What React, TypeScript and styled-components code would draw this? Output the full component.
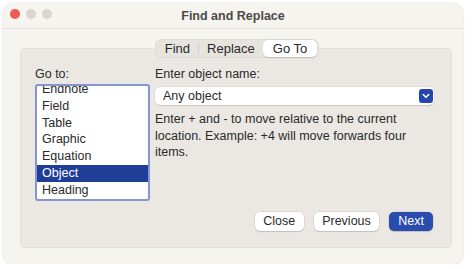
import { FC } from "react"
import styled, { createGlobalStyle } from "styled-components"

const GlobalStyle = createGlobalStyle`
  body {
    margin: 0;
    background: #ffffff;
    font-family: "Liberation Sans", Arial, sans-serif;
  }
`

const items = ["Endnote", "Field", "Table", "Graphic", "Equation", "Object", "Heading"]

const App: FC = () => {
  return (
    <>
      <GlobalStyle />
      <Window>
        <TitleBar>
          <Lights>
            <Light color="#ee5a52" />
            <Light color="#d8d6d2" />
            <Light color="#d8d6d2" />
          </Lights>
          <Title>Find and Replace</Title>
        </TitleBar>
        <Body>
          <Tabs>
            <Tab>Find</Tab>
            <Divider />
            <Tab>Replace</Tab>
            <Tab active>Go To</Tab>
          </Tabs>
          <Panel>
            <Columns>
              <LeftCol>
                <Label>Go to:</Label>
                <ListBox>
                  <ListInner>
                    {items.map((item) => (
                      <Item key={item} selected={item === "Object"}>
                        {item}
                      </Item>
                    ))}
                  </ListInner>
                </ListBox>
              </LeftCol>
              <RightCol>
                <Label>Enter object name:</Label>
                <Select>
                  <span>Any object</span>
                  <Chevron>
                    <svg width="8" height="6" viewBox="0 0 8 6">
                      <path
                        d="M1.2 1.5 L4 4.3 L6.8 1.5"
                        fill="none"
                        stroke="#ffffff"
                        strokeWidth="1.6"
                        strokeLinecap="round"
                        strokeLinejoin="round"
                      />
                    </svg>
                  </Chevron>
                </Select>
                <Help>
                  Enter + and - to move relative to the current location.
                  Example: +4 will move forwards four items.
                </Help>
              </RightCol>
            </Columns>
            <Buttons>
              <Button>Close</Button>
              <Button>Previous</Button>
              <Button primary>Next</Button>
            </Buttons>
          </Panel>
        </Body>
      </Window>
    </>
  )
}

const Window = styled.div`
  margin: 3px 0 0 3px;
  width: 460px;
  height: 261px;
  box-sizing: border-box;
  background: #f6f4ef;
  border-radius: 10px;
  box-shadow: 0 0 0 1px rgba(0, 0, 0, 0.04), 0 1px 3px rgba(0, 0, 0, 0.08);
  display: flex;
  flex-direction: column;
  overflow: hidden;
`

const TitleBar = styled.div`
  position: relative;
  height: 25px;
  border-bottom: 1px solid #e2dfd9;
  display: flex;
  align-items: center;
  justify-content: center;
`

const Lights = styled.div`
  position: absolute;
  left: 7px;
  top: 6px;
  display: flex;
  gap: 6px;
`

const Light = styled.div<{ color: string }>`
  width: 10px;
  height: 10px;
  border-radius: 50%;
  background: ${({ color }) => color};
`

const Title = styled.div`
  font-size: 12.5px;
  font-weight: bold;
  color: #4b4a48;
`

const Body = styled.div`
  flex: 1;
  display: flex;
  flex-direction: column;
  padding: 10px 11px 16px 17px;
`

const Tabs = styled.div`
  align-self: center;
  margin-left: 2px;
  position: relative;
  z-index: 1;
  display: flex;
  align-items: center;
  height: 19px;
  box-sizing: border-box;
  padding: 1px;
  background: #e7e4df;
  border: 1px solid #dedbd5;
  border-radius: 6px;
  margin-bottom: -10px;
`

const Tab = styled.div<{ active?: boolean }>`
  height: 17px;
  line-height: 17px;
  padding: 0 ${({ active }) => (active ? "10px" : "8px")};
  font-size: 13px;
  color: #2a2a2a;
  border-radius: 5px;
  background: ${({ active }) => (active ? "#ffffff" : "transparent")};
  box-shadow: ${({ active }) =>
    active ? "0 0.5px 1px rgba(0,0,0,0.15)" : "none"};
`

const Divider = styled.div`
  width: 1px;
  height: 11px;
  background: #d2cfc9;
`

const Panel = styled.div`
  flex: 1;
  background: #ebe8e3;
  border: 1px solid #e3e0da;
  border-radius: 5px;
  padding: 17px 17px 15px 14px;
  display: flex;
  flex-direction: column;
  justify-content: space-between;
`

const Columns = styled.div`
  display: grid;
  grid-template-columns: 115px 1fr;
  column-gap: 5px;
`

const LeftCol = styled.div`
  display: flex;
  flex-direction: column;
  gap: 2px;
`

const RightCol = styled.div`
  display: flex;
  flex-direction: column;
`

const Label = styled.div`
  font-size: 12.5px;
  color: #2a2a2a;
  line-height: 15px;
  margin-top: 1px;
`

const ListBox = styled.div`
  height: 117px;
  box-sizing: border-box;
  border: 2px solid #8596cf;
  border-radius: 3px;
  background: #ffffff;
  overflow: hidden;
`

const ListInner = styled.div`
  margin-top: -5px;
`

const Item = styled.div<{ selected?: boolean }>`
  height: 16.8px;
  line-height: 16.8px;
  padding-left: 5px;
  font-size: 12.5px;
  color: ${({ selected }) => (selected ? "#ffffff" : "#2a2a2a")};
  background: ${({ selected }) => (selected ? "#1f3e98" : "transparent")};
`

const Select = styled.div`
  margin-top: 5px;
  height: 18px;
  box-sizing: border-box;
  background: #ffffff;
  border-radius: 5px;
  box-shadow: 0 0 0 0.5px rgba(0, 0, 0, 0.08), 0 1px 1px rgba(0, 0, 0, 0.1);
  display: flex;
  align-items: center;
  justify-content: space-between;
  padding: 0 1px 0 8px;
  font-size: 12.5px;
  color: #2a2a2a;
`

const Chevron = styled.div`
  width: 14px;
  height: 14px;
  border-radius: 3px;
  background: #2446ab;
  display: flex;
  align-items: center;
  justify-content: center;
`

const Help = styled.div`
  margin-top: 6px;
  font-size: 12.5px;
  line-height: 16.5px;
  color: #2a2a2a;
  max-width: 270px;
`

const Buttons = styled.div`
  display: flex;
  justify-content: flex-end;
  gap: 10px;
  padding-right: 1px;
  margin-bottom: 1px;
`

const Button = styled.div<{ primary?: boolean }>`
  height: 19px;
  line-height: 19px;
  padding: 0 ${({ primary }) => (primary ? "9px" : "8.5px")};
  font-size: 12.5px;
  border-radius: 5px;
  color: ${({ primary }) => (primary ? "#ffffff" : "#2a2a2a")};
  background: ${({ primary }) => (primary ? "#2a4cae" : "#ffffff")};
  box-shadow: 0 0 0 0.5px rgba(0, 0, 0, 0.12), 0 1px 1px rgba(0, 0, 0, 0.12);
`

export default App
